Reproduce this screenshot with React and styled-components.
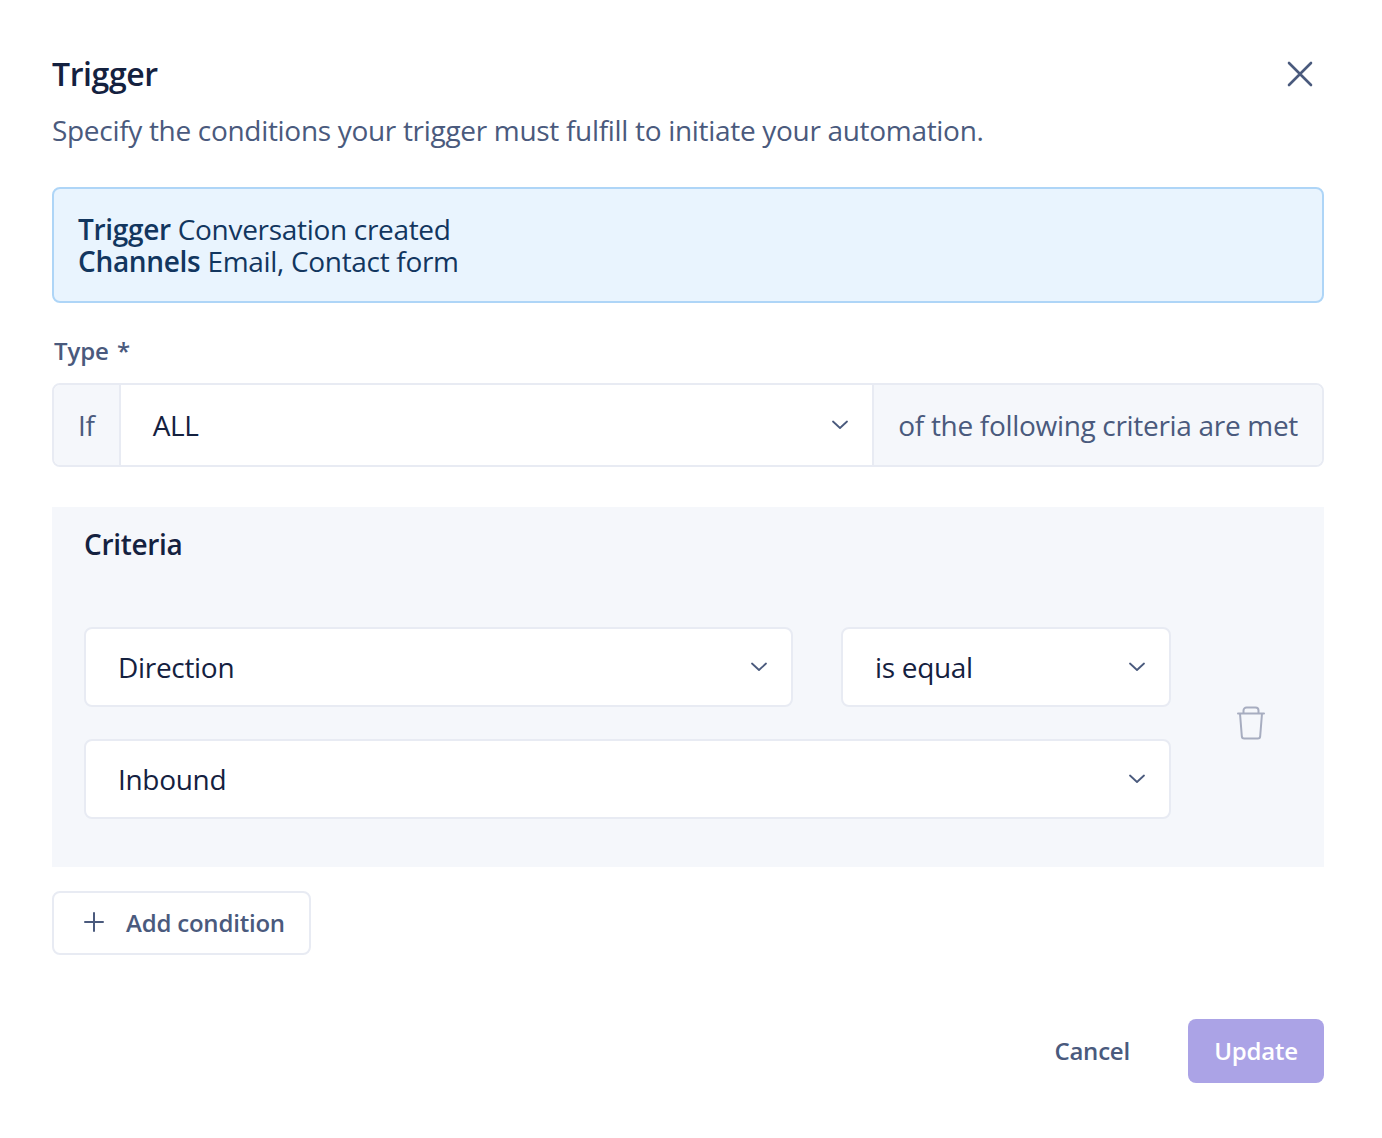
import React from 'react';
import styled, { createGlobalStyle } from 'styled-components';

const GlobalStyle = createGlobalStyle`
  html, body {
    margin: 0;
    padding: 0;
    background: #fff;
    font-family: "Open Sans", "Noto Sans", sans-serif;
    letter-spacing: -0.31px;
  }
  * {
    box-sizing: border-box;
  }
`;

const Modal = styled.div`
  width: 1382px;
  height: 1138px;
  padding: 52px 58px 0 52px;
  display: flex;
  flex-direction: column;
`;

const Header = styled.div`
  display: flex;
  justify-content: space-between;
  align-items: center;
  height: 44px;
`;

const Title = styled.h1`
  margin: 0;
  font-size: 32px;
  line-height: 44px;
  font-weight: 600;
  letter-spacing: -0.4px;
  color: #14213f;
`;

const CloseButton = styled.button`
  width: 32px;
  height: 32px;
  margin-right: 8px;
  padding: 0;
  border: none;
  background: none;
  display: flex;
  align-items: center;
  justify-content: center;
`;

const Subtitle = styled.p`
  margin: 12px 0 0;
  font-size: 28px;
  line-height: 44px;
  color: #4a5a7d;
`;

const Banner = styled.div`
  margin-top: 35px;
  height: 116px;
  padding: 24px 24px;
  background: #e9f4fe;
  border: 2px solid #aed5f7;
  border-radius: 8px;
  font-size: 28px;
  line-height: 32px;
  color: #12365f;

  b {
    font-weight: 600;
  }
`;

const Label = styled.div`
  margin: 32px 0 0 2px;
  height: 32px;
  font-size: 24px;
  line-height: 32px;
  font-weight: 600;
  letter-spacing: -0.1px;
  word-spacing: 2px;
  color: #4a5a7d;
  white-space: pre;
`;

const InputGroup = styled.div`
  margin-top: 16px;
  height: 84px;
  display: flex;
  border: 2px solid #e8ebf3;
  border-radius: 8px;
  overflow: hidden;
`;

const Addon = styled.div`
  display: flex;
  align-items: center;
  padding: 0 24px;
  background: #f5f7fb;
  font-size: 28px;
  color: #4a5a7d;
  white-space: nowrap;
`;

const GroupSelect = styled.div`
  flex: 1;
  display: flex;
  align-items: center;
  justify-content: space-between;
  padding: 0 24px 0 32px;
  background: #fff;
  border-left: 2px solid #e8ebf3;
  border-right: 2px solid #e8ebf3;
  font-size: 28px;
  color: #14213f;
`;

const CriteriaPanel = styled.section`
  margin-top: 40px;
  height: 360px;
  padding: 16px 32px 0;
  background: #f5f7fb;
`;

const CriteriaTitle = styled.h2`
  margin: 0;
  font-size: 28px;
  line-height: 42px;
  font-weight: 600;
  color: #14213f;
`;

const ConditionRow = styled.div`
  margin-top: 62px;
  display: flex;
  align-items: center;
`;

const ConditionFields = styled.div`
  width: 1087px;
  display: grid;
  grid-template-columns: 709px 330px;
  column-gap: 48px;
  row-gap: 32px;
`;

const Select = styled.div`
  grid-column: ${(p) => (p.$wide ? '1 / -1' : 'auto')};
  height: 80px;
  display: flex;
  align-items: center;
  justify-content: space-between;
  padding: 0 24px 0 32px;
  background: #fff;
  border: 2px solid #e8ebf3;
  border-radius: 8px;
  font-size: 28px;
  color: #14213f;
`;

const DeleteButton = styled.button`
  margin-left: 64px;
  width: 32px;
  height: 36px;
  padding: 0;
  border: none;
  background: none;
  display: flex;
  align-items: center;
  justify-content: center;
`;

const AddButton = styled.button`
  margin-top: 24px;
  width: 259px;
  height: 64px;
  padding: 0 0 2px 29px;
  display: flex;
  align-items: center;
  gap: 21px;
  background: #fff;
  border: 2px solid #e8ebf3;
  border-radius: 8px;
  font-family: inherit;
  font-size: 24px;
  font-weight: 600;
  letter-spacing: -0.2px;
  color: #4a5a7d;
`;

const Footer = styled.div`
  margin-top: 64px;
  display: flex;
  justify-content: flex-end;
  align-items: center;
  gap: 58px;
`;

const CancelButton = styled.button`
  padding: 0 0 2px;
  border: none;
  background: none;
  font-family: inherit;
  font-size: 24px;
  font-weight: 600;
  letter-spacing: -0.2px;
  color: #4a5a7d;
`;

const UpdateButton = styled.button`
  width: 136px;
  height: 64px;
  padding: 0 0 2px;
  border: none;
  border-radius: 8px;
  background: #aba3e6;
  font-family: inherit;
  font-size: 24px;
  font-weight: 600;
  letter-spacing: -0.2px;
  color: #fff;
`;

const Chevron = () => (
  <svg width="16" height="10" viewBox="0 0 16 10" fill="none">
    <path d="M1 1.5L8 8L15 1.5" stroke="#4a5a7d" strokeWidth="1.8" strokeLinecap="round" strokeLinejoin="round" />
  </svg>
);

const CloseIcon = () => (
  <svg width="26" height="26" viewBox="0 0 26 26" fill="none">
    <path d="M2 2L24 24M24 2L2 24" stroke="#4a5a7d" strokeWidth="2.6" strokeLinecap="round" />
  </svg>
);

const TrashIcon = () => (
  <svg width="28" height="34" viewBox="0 0 28 34" fill="none">
    <path
      d="M1 7.5H27M3 7.5L4.8 30a2.5 2.5 0 0 0 2.5 2.5H20.7a2.5 2.5 0 0 0 2.5-2.5L25 7.5M6.5 7.5V4.5A3 3 0 0 1 9.5 1.5H18.5A3 3 0 0 1 21.5 4.5V7.5"
      stroke="#a7adc0"
      strokeWidth="2"
      strokeLinecap="round"
      strokeLinejoin="round"
    />
  </svg>
);

const PlusIcon = () => (
  <svg width="22" height="22" viewBox="0 0 22 22" fill="none">
    <path d="M11 2V20M2 11H20" stroke="#4a5a7d" strokeWidth="2" strokeLinecap="round" />
  </svg>
);

function App() {
  return (
    <Modal>
      <GlobalStyle />
      <Header>
        <Title>Trigger</Title>
        <CloseButton aria-label="Close">
          <CloseIcon />
        </CloseButton>
      </Header>
      <Subtitle>Specify the conditions your trigger must fulfill to initiate your automation.</Subtitle>

      <Banner>
        <div><b>Trigger</b> Conversation created</div>
        <div><b>Channels</b> Email, Contact form</div>
      </Banner>

      <Label>Type *</Label>
      <InputGroup>
        <Addon>If</Addon>
        <GroupSelect>
          ALL
          <Chevron />
        </GroupSelect>
        <Addon>of the following criteria are met</Addon>
      </InputGroup>

      <CriteriaPanel>
        <CriteriaTitle>Criteria</CriteriaTitle>
        <ConditionRow>
          <ConditionFields>
            <Select>
              Direction
              <Chevron />
            </Select>
            <Select>
              is equal
              <Chevron />
            </Select>
            <Select $wide>
              Inbound
              <Chevron />
            </Select>
          </ConditionFields>
          <DeleteButton aria-label="Delete">
            <TrashIcon />
          </DeleteButton>
        </ConditionRow>
      </CriteriaPanel>

      <AddButton>
        <PlusIcon />
        Add condition
      </AddButton>

      <Footer>
        <CancelButton>Cancel</CancelButton>
        <UpdateButton>Update</UpdateButton>
      </Footer>
    </Modal>
  );
}

export default App;
